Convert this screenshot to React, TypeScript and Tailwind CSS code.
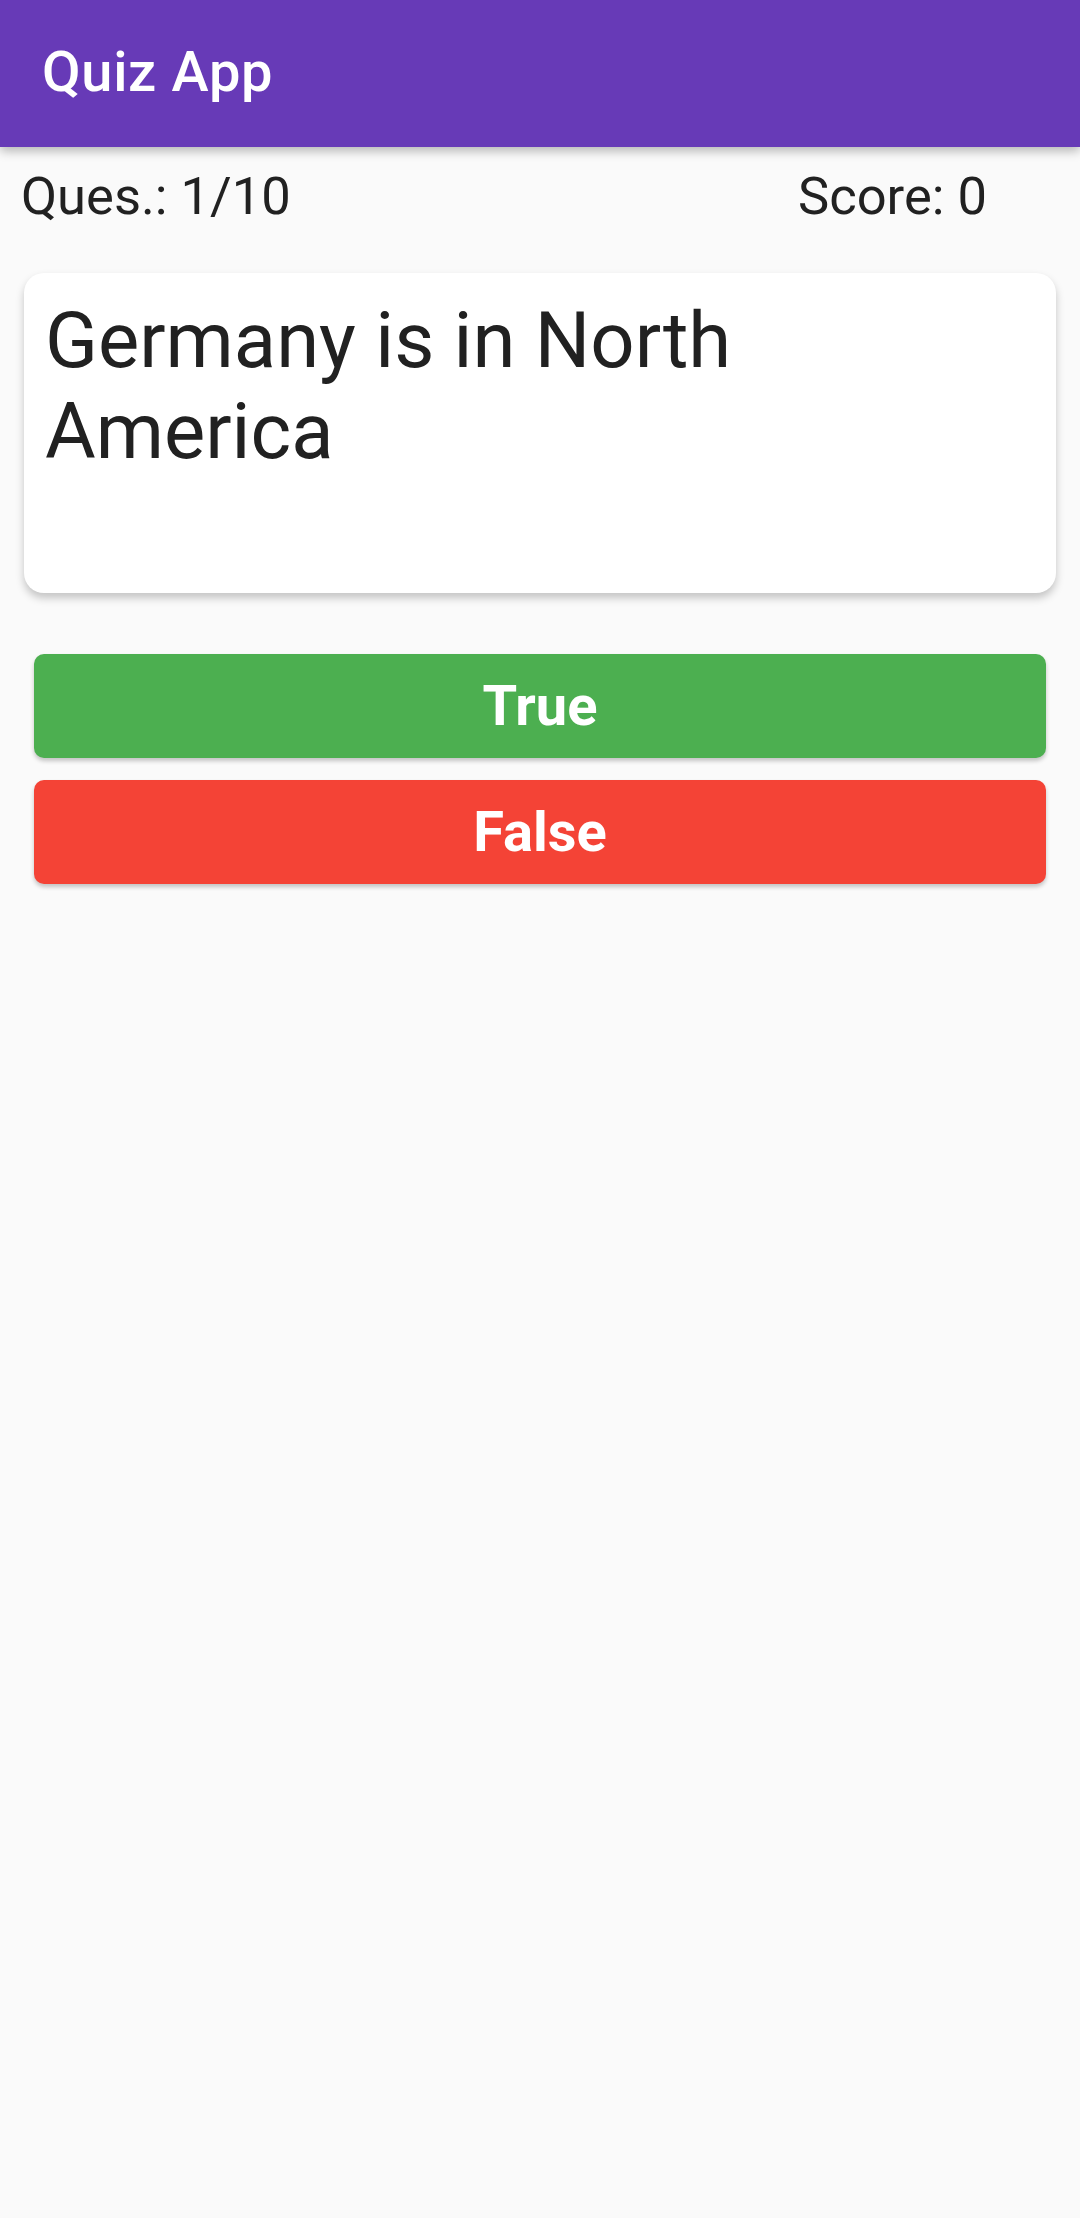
const font = { fontFamily: 'Roboto, "Noto Sans", sans-serif' };

function AnswerButton({ label, color }: { label: string; color: string }) {
  return (
    <button
      className={`h-[104px] w-full rounded-[10px] text-[56px] font-bold leading-none text-white shadow-[0_3px_4px_rgba(0,0,0,0.22)] ${color}`}
    >
      {label}
    </button>
  );
}

export default function App() {
  return (
    <div className="min-h-[2218px] w-[1080px] bg-[#fafafa] text-[#212121]" style={font}>
      <header className="relative z-10 flex h-[147px] items-center bg-[#673ab7] pl-[42px] shadow-[0_4px_10px_rgba(0,0,0,0.28)]">
        <h1 className="pb-[3px] text-[56px] font-medium leading-none tracking-[0.0125em] text-white">Quiz App</h1>
      </header>

      <div className="flex pt-[19px] text-[52.5px] leading-[1.172]">
        <span className="pl-[21px]">Ques.: 1/10</span>
        <span className="ml-auto pr-[93px]">Score: 0</span>
      </div>

      <div className="mx-[24px] mt-[45px] h-[320px] rounded-[20px] bg-white px-[21px] pt-[22px] shadow-[0_5px_9px_rgba(0,0,0,0.22)]">
        <p className="w-[720px] text-[77.8px] leading-[91px]">Germany is in North America</p>
      </div>

      <div className="mx-[34px] mt-[61px] flex flex-col gap-[22px]">
        <AnswerButton label="True" color="bg-[#4caf50]" />
        <AnswerButton label="False" color="bg-[#f44336]" />
      </div>
    </div>
  );
}
